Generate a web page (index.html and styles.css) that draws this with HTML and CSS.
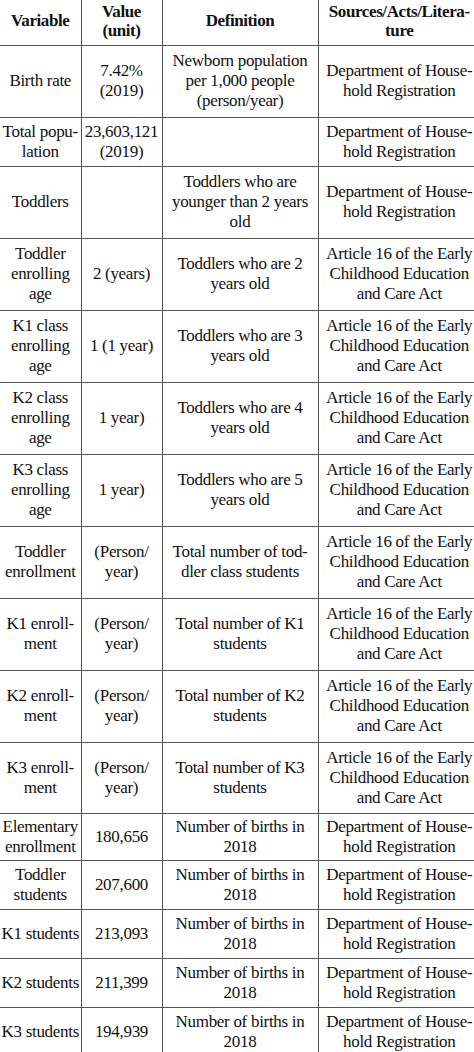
FILE: index.html
```html
<!DOCTYPE html>
<html lang="en">
<head>
<meta charset="utf-8">
<title>Variables table</title>
<link rel="stylesheet" href="styles.css">
</head>
<body>
<table class="vars">
  <colgroup>
    <col class="c1"><col class="c2"><col class="c3"><col class="c4">
  </colgroup>
  <thead>
    <tr class="rh">
      <th>Variable</th>
      <th>Value<br>(unit)</th>
      <th>Definition</th>
      <th>Sources/Acts/Litera-<br>ture</th>
    </tr>
  </thead>
  <tbody>
    <tr class="r3">
      <td>Birth rate</td>
      <td>7.42%<br>(2019)</td>
      <td>Newborn population<br>per 1,000 people<br>(person/year)</td>
      <td>Department of House-<br>hold Registration</td>
    </tr>
    <tr class="r2">
      <td>Total popu-<br>lation</td>
      <td>23,603,121<br>(2019)</td>
      <td></td>
      <td>Department of House-<br>hold Registration</td>
    </tr>
    <tr class="r3">
      <td>Toddlers</td>
      <td></td>
      <td>Toddlers who are<br>younger than 2 years<br>old</td>
      <td>Department of House-<br>hold Registration</td>
    </tr>
    <tr class="r3">
      <td>Toddler<br>enrolling<br>age</td>
      <td>2 (years)</td>
      <td>Toddlers who are 2<br>years old</td>
      <td>Article 16 of the Early<br>Childhood Education<br>and Care Act</td>
    </tr>
    <tr class="r3">
      <td>K1 class<br>enrolling<br>age</td>
      <td>1 (1 year)</td>
      <td>Toddlers who are 3<br>years old</td>
      <td>Article 16 of the Early<br>Childhood Education<br>and Care Act</td>
    </tr>
    <tr class="r3">
      <td>K2 class<br>enrolling<br>age</td>
      <td>1 year)</td>
      <td>Toddlers who are 4<br>years old</td>
      <td>Article 16 of the Early<br>Childhood Education<br>and Care Act</td>
    </tr>
    <tr class="r3">
      <td>K3 class<br>enrolling<br>age</td>
      <td>1 year)</td>
      <td>Toddlers who are 5<br>years old</td>
      <td>Article 16 of the Early<br>Childhood Education<br>and Care Act</td>
    </tr>
    <tr class="r3">
      <td>Toddler<br>enrollment</td>
      <td>(Person/<br>year)</td>
      <td>Total number of tod-<br>dler class students</td>
      <td>Article 16 of the Early<br>Childhood Education<br>and Care Act</td>
    </tr>
    <tr class="r3">
      <td>K1 enroll-<br>ment</td>
      <td>(Person/<br>year)</td>
      <td>Total number of K1<br>students</td>
      <td>Article 16 of the Early<br>Childhood Education<br>and Care Act</td>
    </tr>
    <tr class="r3">
      <td>K2 enroll-<br>ment</td>
      <td>(Person/<br>year)</td>
      <td>Total number of K2<br>students</td>
      <td>Article 16 of the Early<br>Childhood Education<br>and Care Act</td>
    </tr>
    <tr class="r3b">
      <td>K3 enroll-<br>ment</td>
      <td>(Person/<br>year)</td>
      <td>Total number of K3<br>students</td>
      <td>Article 16 of the Early<br>Childhood Education<br>and Care Act</td>
    </tr>
    <tr class="r2s">
      <td>Elementary<br>enrollment</td>
      <td>180,656</td>
      <td>Number of births in<br>2018</td>
      <td>Department of House-<br>hold Registration</td>
    </tr>
    <tr class="r2">
      <td>Toddler<br>students</td>
      <td>207,600</td>
      <td>Number of births in<br>2018</td>
      <td>Department of House-<br>hold Registration</td>
    </tr>
    <tr class="r2">
      <td>K1 students</td>
      <td>213,093</td>
      <td>Number of births in<br>2018</td>
      <td>Department of House-<br>hold Registration</td>
    </tr>
    <tr class="r2">
      <td>K2 students</td>
      <td>211,399</td>
      <td>Number of births in<br>2018</td>
      <td>Department of House-<br>hold Registration</td>
    </tr>
    <tr class="r2">
      <td>K3 students</td>
      <td>194,939</td>
      <td>Number of births in<br>2018</td>
      <td>Department of House-<br>hold Registration</td>
    </tr>
  </tbody>
</table>
</body>
</html>
```

FILE: styles.css
```css
html {
  overflow: hidden;
  background: #ffffff;
}

body {
  margin: 0;
  background: #ffffff;
  color: #111111;
  font-family: "Liberation Serif", "Times New Roman", serif;
  font-size: 17px;
  line-height: 20px;
  letter-spacing: -0.3px;
}

.vars {
  border-collapse: collapse;
  border-style: hidden;
  table-layout: fixed;
  width: 480px;
  margin-top: -3px;
}

.c1 { width: 81px; }
.c2 { width: 81px; }
.c3 { width: 156px; }
.c4 { width: 162px; }

.vars th,
.vars td {
  border: 1px solid #555555;
  padding: 0;
  text-align: center;
  vertical-align: middle;
  white-space: nowrap;
  box-sizing: border-box;
}

.vars th {
  font-weight: bold;
  line-height: 19px;
  letter-spacing: -0.4px;
}

.rh th { height: 48px; }
.r3 td { height: 72px; }
.r3b td { height: 71px; }
.r2 td { height: 49px; }
.r2s td { height: 47px; }
```
